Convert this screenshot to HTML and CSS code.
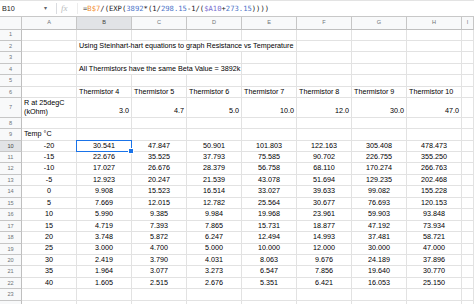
FILE: index.html
```html
<!DOCTYPE html>
<html lang="en">
<head>
    <meta charset="UTF-8">
    <title>Thermistors - Sheet</title>
    <link rel="stylesheet" href="styles.css">
</head>
<body>
    <div class="formula-bar">
        <div class="name-box">B10</div>
        <div class="name-arrow">&#9662;</div>
        <div class="fx">fx</div>
        <div class="formula">=<span class="ref1">B$7</span>/(EXP(<span class="num">3892</span>*(1/<span class="num">298.15</span>-1/(<span class="ref2">$A10</span>+<span class="num">273.15</span>))))</div>
    </div>

    <div class="sheet" id="sheet"></div>

    <script>
        // Build the grid from data
        document.addEventListener('DOMContentLoaded', function() {
            const sheet = document.getElementById('sheet');
            const cols = ['A', 'B', 'C', 'D', 'E', 'F', 'G', 'H', 'I'];
            const temps = [-20, -15, -10, -5, 0, 5, 10, 15, 20, 25, 30, 35, 40];
            const values = [
                ['30.541', '47.847', '50.901', '101.803', '122.163', '305.408', '478.473'],
                ['22.676', '35.525', '37.793', '75.585', '90.702', '226.755', '355.250'],
                ['17.027', '26.676', '28.379', '56.758', '68.110', '170.274', '266.763'],
                ['12.923', '20.247', '21.539', '43.078', '51.694', '129.235', '202.468'],
                ['9.908', '15.523', '16.514', '33.027', '39.633', '99.082', '155.228'],
                ['7.669', '12.015', '12.782', '25.564', '30.677', '76.693', '120.153'],
                ['5.990', '9.385', '9.984', '19.968', '23.961', '59.903', '93.848'],
                ['4.719', '7.393', '7.865', '15.731', '18.877', '47.192', '73.934'],
                ['3.748', '5.872', '6.247', '12.494', '14.993', '37.481', '58.721'],
                ['3.000', '4.700', '5.000', '10.000', '12.000', '30.000', '47.000'],
                ['2.419', '3.790', '4.031', '8.063', '9.676', '24.189', '37.896'],
                ['1.964', '3.077', '3.273', '6.547', '7.856', '19.640', '30.770'],
                ['1.605', '2.515', '2.676', '5.351', '6.421', '16.053', '25.150']
            ];
            const rVals = ['3.0', '4.7', '5.0', '10.0', '12.0', '30.0', '47.0'];

            function cell(text, cls, span) {
                const el = document.createElement('div');
                el.className = 'cell' + (cls ? ' ' + cls : '');
                if (span) el.style.gridColumn = 'span ' + span;
                if (text !== undefined && text !== '') {
                    const t = document.createElement('span');
                    t.textContent = text;
                    el.appendChild(t);
                }
                sheet.appendChild(el);
                return el;
            }

            // Column headers
            cell('', 'corner');
            cols.forEach(c => cell(c, 'col-head' + (c === 'B' ? ' active' : '')));

            for (let r = 1; r <= 24; r++) {
                // row 24 is cut off by the window, its number isn't visible
                cell(r < 24 ? String(r) : '', 'row-head' + (r === 10 ? ' active' : ''));

                if (r === 2) {
                    cell('');
                    cell('Using Steinhart-hart equations to graph Resistance vs Temperature', 'left', 4);
                    for (let i = 0; i < 4; i++) cell('');
                } else if (r === 4) {
                    cell('');
                    cell('All Thermistors have the same Beta Value = 3892k', 'left', 3);
                    for (let i = 0; i < 5; i++) cell('');
                } else if (r === 6) {
                    cell('');
                    for (let i = 4; i <= 10; i++) cell('Thermistor ' + i, 'left');
                    cell('');
                } else if (r === 7) {
                    cell('R at 25degC (kOhm)', 'left wrap');
                    rVals.forEach(v => cell(v, 'right'));
                    cell('');
                } else if (r === 9) {
                    cell('Temp °C', 'left');
                    for (let i = 0; i < 8; i++) cell('');
                } else if (r >= 10 && r <= 22) {
                    cell(String(temps[r - 10]), 'center');
                    values[r - 10].forEach((v, i) => {
                        const el = cell(v, 'center');
                        if (r === 10 && i === 0) el.classList.add('selected');
                    });
                    cell('');
                } else {
                    for (let i = 0; i < 9; i++) cell('');
                }
            }
        });
    </script>
</body>
</html>
```

FILE: styles.css
```css
/* Spreadsheet view */
* {
    box-sizing: border-box;
}

body {
    margin: 0;
    background: #fff;
    font-family: "Liberation Sans", Arial, sans-serif;
    color: #000;
    overflow: hidden;
}

.formula-bar {
    height: 16.5px;
    display: flex;
    align-items: center;
    border-top: 1px solid #e3e3e3;
    border-bottom: 1px solid #c8c8c8;
    font-size: 7px;
}

.name-box {
    width: 44px;
    padding-left: 2px;
    color: #202124;
    font-size: 7.2px;
}

.name-arrow {
    width: 13px;
    font-size: 6px;
    color: #5f6368;
    border-right: 1px solid #dadce0;
    height: 11px;
    line-height: 11px;
}

.fx {
    width: 21px;
    height: 11px;
    line-height: 11px;
    padding-left: 4px;
    font-family: "Liberation Serif", serif;
    font-style: italic;
    font-size: 9px;
    color: #b8bbbe;
    border-right: 1px solid #ececec;
}

.formula {
    padding-left: 5px;
    font-family: "DejaVu Sans Mono", monospace;
    font-size: 7.2px;
    letter-spacing: 0;
    color: #202124;
}

.formula .ref1 {
    color: #f28b2c;
}

.formula .ref2 {
    color: #7a6fd0;
}

.formula .num {
    color: #4a73c8;
}

.sheet {
    display: grid;
    grid-template-columns: 22px repeat(8, 55px) 1fr;
    grid-template-rows: 13px repeat(6, 11.45px) 19.6px repeat(17, 11.45px);
}

.cell {
    position: relative;
    border-right: 1px solid #e2e2e2;
    border-bottom: 1px solid #e2e2e2;
    font-size: 7.2px;
    line-height: 8.5px;
    display: flex;
    align-items: flex-end;
    padding: 0 2px 1px 2px;
    white-space: nowrap;
    min-width: 0;
}

.corner,
.col-head,
.row-head {
    background: #f8f9fa;
    color: #6f7377;
    font-size: 5.6px;
    border-color: #c6c6c6;
    justify-content: center;
    align-items: center;
    padding: 0;
}

.col-head {
    border-bottom: 1px solid #bfbfbf;
}

.row-head {
    border-right: 1px solid #bfbfbf;
}

.col-head.active,
.row-head.active {
    background: #e1e3e6;
    color: #444;
}

.left {
    justify-content: flex-start;
}

.right {
    justify-content: flex-end;
}

.center {
    justify-content: center;
}

.wrap {
    white-space: normal;
    align-items: flex-start;
    padding-top: 1px;
    line-height: 8.6px;
}

.wrap span {
    width: 45px;
}

.selected::after {
    content: "";
    position: absolute;
    left: -1px;
    top: -1px;
    right: -1px;
    bottom: -1px;
    border: 1.5px solid #1a73e8;
}

.selected::before {
    content: "";
    position: absolute;
    right: -3px;
    bottom: -3px;
    width: 4px;
    height: 4px;
    background: #1a73e8;
    border: 1px solid #fff;
    z-index: 2;
}
```
